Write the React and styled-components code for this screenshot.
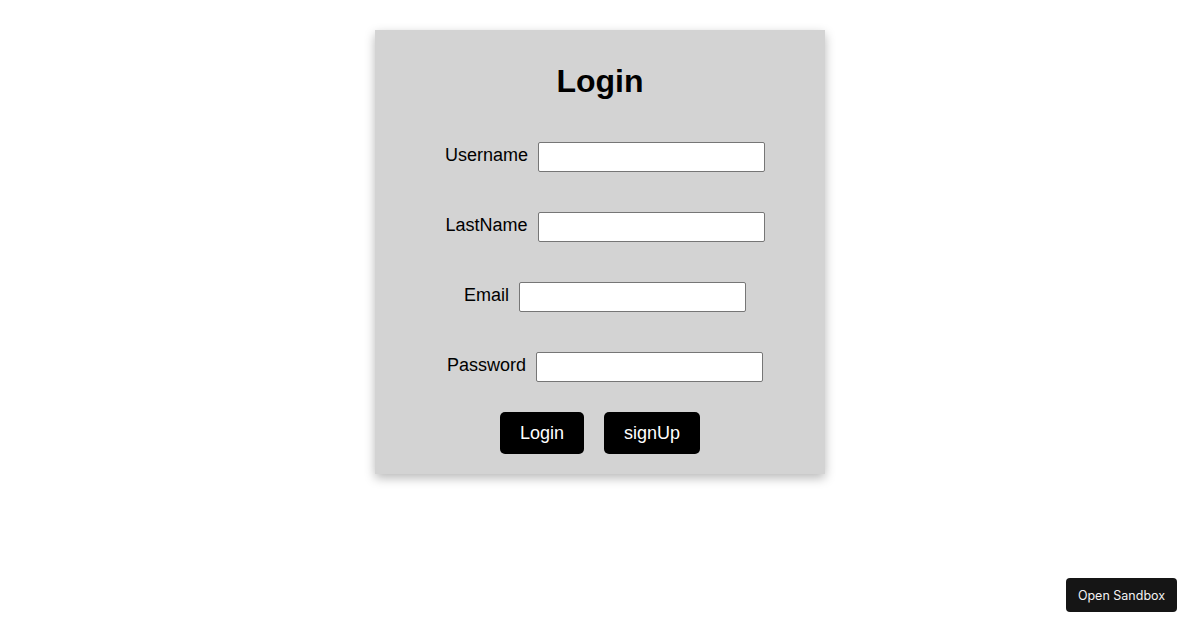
import styled, { createGlobalStyle } from "styled-components";

const GlobalStyle = createGlobalStyle`
  body {
    margin: 0;
    background: #ffffff;
    font-family: "Liberation Sans", Arial, sans-serif;
  }
`;

const fields = [
  { label: "Username", type: "text" },
  { label: "LastName", type: "text" },
  { label: "Email", type: "email" },
  { label: "Password", type: "password" },
];

const App = () => {
  return (
    <>
      <GlobalStyle />
      <Page>
        <Card>
          <Title>Login</Title>
          <Form onSubmit={(e) => e.preventDefault()}>
            {fields.map((f) => (
              <FieldRow key={f.label}>
                <Label htmlFor={f.label}>{f.label}</Label>
                <Input id={f.label} type={f.type} />
              </FieldRow>
            ))}
            <ButtonRow>
              <ActionButton type="submit">Login</ActionButton>
              <ActionButton type="button">signUp</ActionButton>
            </ButtonRow>
          </Form>
        </Card>
      </Page>
      <SandboxButton>Open Sandbox</SandboxButton>
    </>
  );
};

const Page = styled.main`
  display: flex;
  justify-content: center;
  padding-top: 30px;
  min-height: 630px;
  box-sizing: border-box;
`;

const Card = styled.section`
  display: flex;
  flex-direction: column;
  align-items: center;
  width: 450px;
  height: 444px;
  padding: 33px 0 20px;
  box-sizing: border-box;
  background-color: #d3d3d3;
  box-shadow: 0 4px 10px rgba(0, 0, 0, 0.28);
`;

const Title = styled.h1`
  margin: 0 0 42px;
  font-size: 32px;
  line-height: 37px;
  font-weight: 700;
  color: #000;
`;

const Form = styled.form`
  display: flex;
  flex-direction: column;
  align-items: center;
  gap: 40px;
`;

const FieldRow = styled.div`
  display: flex;
  align-items: center;
  height: 30px;
`;

const Label = styled.label`
  margin: 0 10px;
  padding-bottom: 4px;
  font-size: 18px;
  color: #000;
`;

const Input = styled.input`
  width: 227px;
  height: 30px;
  box-sizing: border-box;
  border: 1px solid #767676;
  border-radius: 2px;
  background: #fff;
  font-size: 13px;
  padding: 1px 2px;
`;

const ButtonRow = styled.div`
  display: flex;
  gap: 20px;
  margin-top: -10px;
`;

const ActionButton = styled.button`
  height: 42px;
  padding: 0 20px;
  border: none;
  border-radius: 5px;
  background-color: #000;
  color: #fff;
  font-family: "Liberation Sans", Arial, sans-serif;
  font-size: 18px;
  cursor: pointer;
`;

const SandboxButton = styled.button`
  position: fixed;
  right: 23px;
  bottom: 18px;
  width: 111px;
  height: 34px;
  border: none;
  border-radius: 4px;
  background-color: #151515;
  color: #f2f2f2;
  font-family: Inter, "Liberation Sans", sans-serif;
  font-size: 12.5px;
  cursor: pointer;
`;

export default App;
